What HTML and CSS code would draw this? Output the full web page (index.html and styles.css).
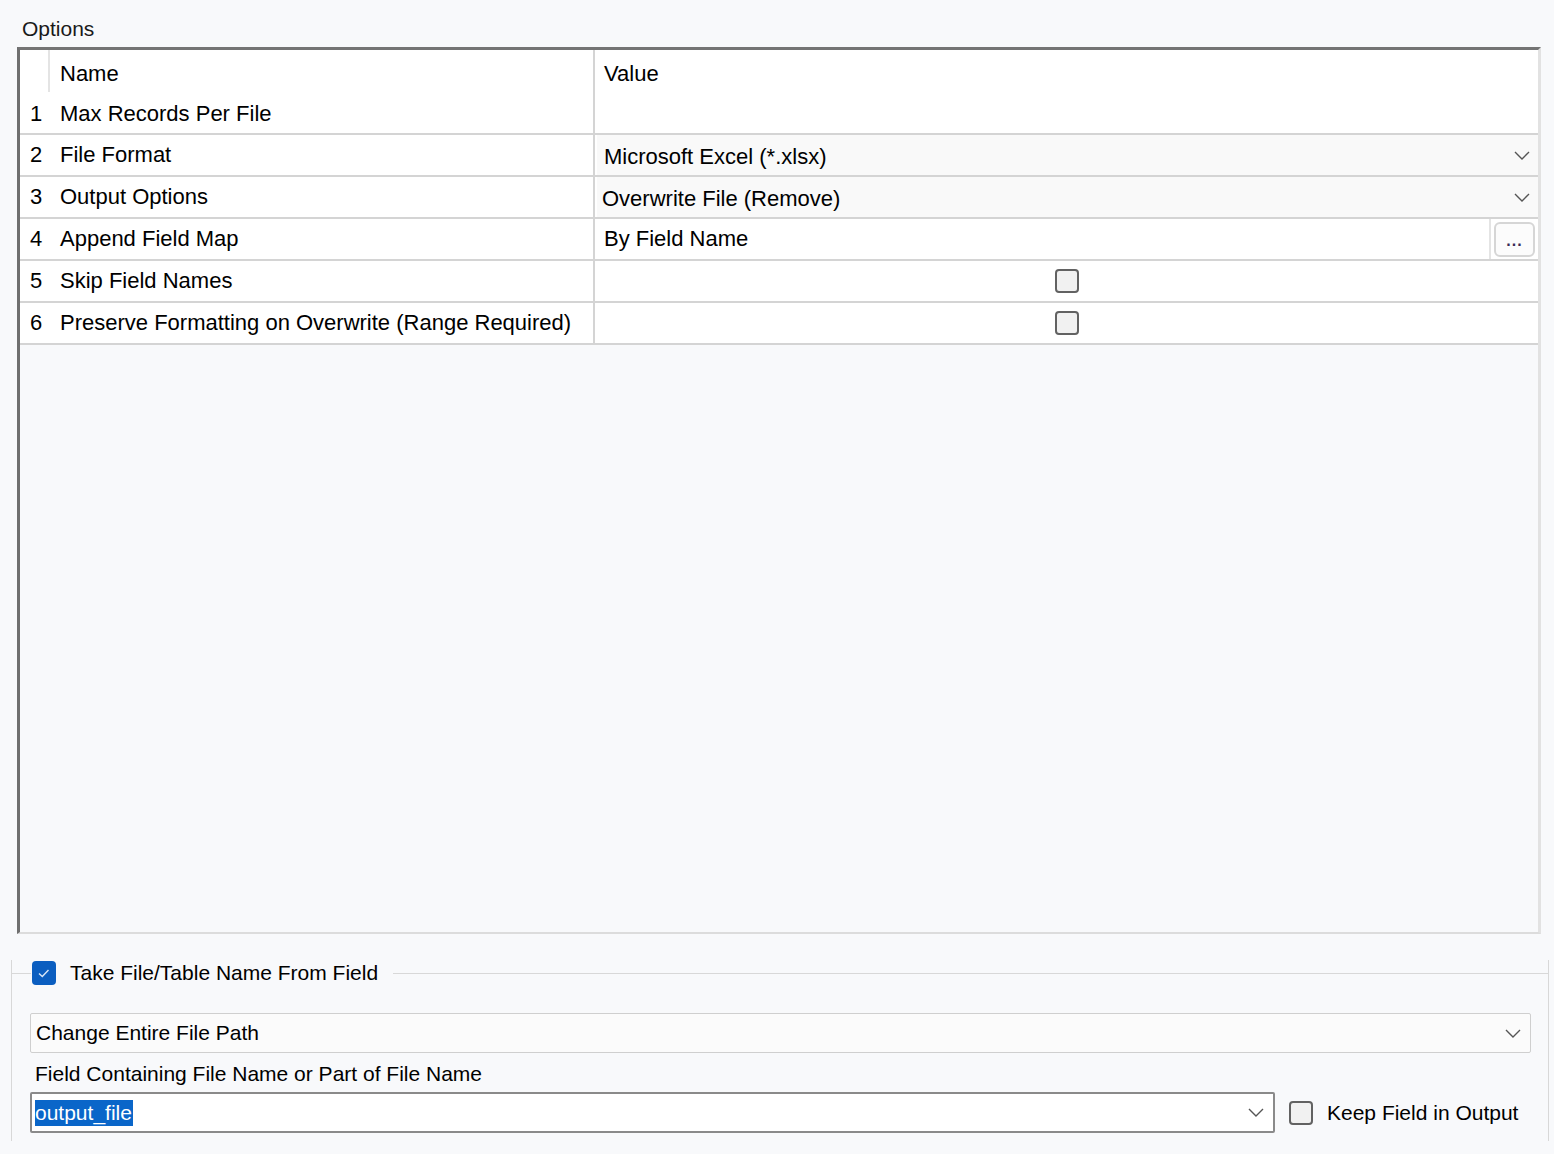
FILE: index.html
```html
<!DOCTYPE html>
<html>
<head>
<meta charset="utf-8">
<title>Options</title>
<link rel="stylesheet" href="styles.css">
</head>
<body>
<div class="page">
  <div class="options-label">Options</div>
  <div class="grid">
    <div class="row header">
      <div class="num"></div>
      <div class="name">Name</div>
      <div class="val">Value</div>
    </div>
    <div class="row first">
      <div class="num">1</div>
      <div class="name">Max Records Per File</div>
      <div class="val"></div>
    </div>
    <div class="row">
      <div class="num">2</div>
      <div class="name">File Format</div>
      <div class="val flush">
        <div class="cell-combo">
          <span>Microsoft Excel (*.xlsx)</span>
          <svg class="chev" width="16" height="9" viewBox="0 0 16 9"><path d="M1 1 L8 8 L15 1"/></svg>
        </div>
      </div>
    </div>
    <div class="row">
      <div class="num">3</div>
      <div class="name">Output Options</div>
      <div class="val flush">
        <div class="cell-combo alt">
          <span>Overwrite File (Remove)</span>
          <svg class="chev" width="16" height="9" viewBox="0 0 16 9"><path d="M1 1 L8 8 L15 1"/></svg>
        </div>
      </div>
    </div>
    <div class="row">
      <div class="num">4</div>
      <div class="name">Append Field Map</div>
      <div class="val flush">
        <div class="cell-text">By Field Name</div>
        <div class="ellipsis-wrap"><div class="ellipsis">...</div></div>
      </div>
    </div>
    <div class="row">
      <div class="num">5</div>
      <div class="name">Skip Field Names</div>
      <div class="val center"><span class="cb"></span></div>
    </div>
    <div class="row">
      <div class="num">6</div>
      <div class="name">Preserve Formatting on Overwrite (Range Required)</div>
      <div class="val center"><span class="cb"></span></div>
    </div>
  </div>

  <div class="group">
    <div class="legend">
      <span class="line-start"></span>
      <span class="cb checked"><svg width="24" height="24" viewBox="0 0 24 24"><path d="M7 12.5 L10.3 15.5 L16.5 9"/></svg></span>
      <span class="legend-text">Take File/Table Name From Field</span>
      <span class="line-end"></span>
    </div>
    <div class="select">
      <span>Change Entire File Path</span>
      <svg class="chev" width="16" height="9" viewBox="0 0 16 9"><path d="M1 1 L8 8 L15 1"/></svg>
    </div>
    <div class="field-label">Field Containing File Name or Part of File Name</div>
    <div class="field-row">
      <div class="input">
        <span class="selected">output_file</span>
        <svg class="chev" width="16" height="9" viewBox="0 0 16 9"><path d="M1 1 L8 8 L15 1"/></svg>
      </div>
      <span class="cb"></span>
      <span class="keep">Keep Field in Output</span>
    </div>
  </div>
</div>
</body>
</html>
```

FILE: styles.css
```css
html, body {
  margin: 0;
  padding: 0;
  background: #f8f9fb;
}

body {
  font-family: "Liberation Sans", Arial, sans-serif;
  color: #000;
  width: 1554px;
  height: 1154px;
  overflow: hidden;
}

.options-label {
  height: 47px;
  padding-left: 22px;
  box-sizing: border-box;
  display: flex;
  align-items: center;
  padding-top: 10px;
  font-size: 21px;
  color: #1a1a1a;
}

.grid {
  margin-left: 17px;
  width: 1524px;
  height: 887px;
  box-sizing: border-box;
  border-left: 3px solid #6f6f6f;
  border-top: 3px solid #747474;
  border-right: 3px solid #e2e2e2;
  border-bottom: 2px solid #dcdcdc;
  background: #f8f9fb;
  font-size: 22px;
}

.row {
  display: grid;
  grid-template-columns: 30px 543px 1fr;
  height: 42px;
  box-sizing: border-box;
  background: #fff;
  border-bottom: 2px solid #d4d4d4;
}

.row.header {
  height: 42px;
  border-bottom: none;
}

.row.header .name,
.row.header .val {
  padding-top: 5px;
}

.row.first {
  height: 43px;
}

.row.first .num,
.row.first .name {
  padding-top: 2px;
}

.num {
  display: flex;
  align-items: center;
  padding-left: 10px;
  box-sizing: border-box;
}

.header .num {
  border-right: 2px solid #e4e4e4;
}

.name {
  display: flex;
  align-items: center;
  padding-left: 10px;
  white-space: nowrap;
}

.val {
  display: flex;
  align-items: center;
  padding-left: 9px;
  border-left: 2px solid #d4d4d4;
  min-width: 0;
}

.val.flush {
  padding-left: 0;
  align-items: stretch;
}

.val.center {
  justify-content: center;
  padding-left: 0;
}

.cell-combo {
  flex: 1;
  display: flex;
  align-items: center;
  justify-content: space-between;
  margin-left: 2px;
  padding-left: 7px;
  padding-right: 8px;
  padding-top: 3px;
  background: #f9f9f9;
}

.cell-combo .chev {
  margin-top: -3px;
}

.cell-combo.alt {
  padding-left: 5px;
}

.chev {
  fill: none;
  stroke: #555;
  stroke-width: 1.4;
  flex: 0 0 auto;
}

.cell-text {
  flex: 1;
  display: flex;
  align-items: center;
  padding-left: 9px;
}

.ellipsis-wrap {
  width: 49px;
  box-sizing: border-box;
  border-left: 2px solid #e4e4e4;
  padding: 3px 3px 2px 3px;
  display: flex;
}

.ellipsis {
  flex: 1;
  border: 2px solid #d6d6d6;
  border-radius: 6px;
  background: #fcfcfc;
  font-size: 16px;
  font-weight: bold;
  display: flex;
  align-items: flex-end;
  justify-content: center;
  padding-bottom: 5px;
  color: #3a2a55;
  letter-spacing: 1px;
}

.cb {
  display: inline-block;
  width: 24px;
  height: 24px;
  box-sizing: border-box;
  border: 2px solid #626262;
  border-radius: 4px;
  background: #f1f1f1;
  flex: 0 0 auto;
}

.cb.checked {
  border: none;
  background: #0b5ec0;
}

.cb.checked svg {
  display: block;
  fill: none;
  stroke: #d8e6f7;
  stroke-width: 1.4;
}

.group {
  margin: 39px 5px 0 11px;
  height: 181px;
  border-left: 1px solid #d8d8d8;
  border-right: 1px solid #d8d8d8;
  font-size: 21px;
}

.legend {
  display: flex;
  align-items: center;
  height: 26px;
  margin-top: -13px;
}

.line-start, .line-end {
  height: 0;
  border-top: 1px solid #d8d8d8;
}

.line-start {
  width: 19px;
  margin-right: 1px;
}

.line-end {
  flex: 1;
  margin-left: 15px;
}

.legend-text {
  margin-left: 14px;
  white-space: nowrap;
}

.select {
  margin: 27px 17px 0 18px;
  height: 40px;
  box-sizing: border-box;
  border: 1px solid #cfcfcf;
  border-radius: 2px;
  background: #fbfbfb;
  display: flex;
  align-items: center;
  justify-content: space-between;
  padding-left: 5px;
  padding-right: 9px;
}

.field-label {
  height: 39px;
  box-sizing: border-box;
  padding-top: 3px;
  padding-left: 23px;
  display: flex;
  align-items: center;
}

.field-row {
  display: flex;
  align-items: center;
  margin-left: 18px;
}

.input {
  width: 1245px;
  height: 41px;
  box-sizing: border-box;
  border: 2px solid #8a8a8a;
  border-radius: 2px;
  background: #fff;
  display: flex;
  align-items: center;
  justify-content: space-between;
  padding-left: 3px;
  padding-right: 9px;
}

.selected {
  background: #0a66c9;
  color: #fff;
  line-height: 26px;
  padding-right: 1px;
}

.field-row .cb {
  margin-left: 14px;
}

.keep {
  margin-left: 14px;
  white-space: nowrap;
}
```
